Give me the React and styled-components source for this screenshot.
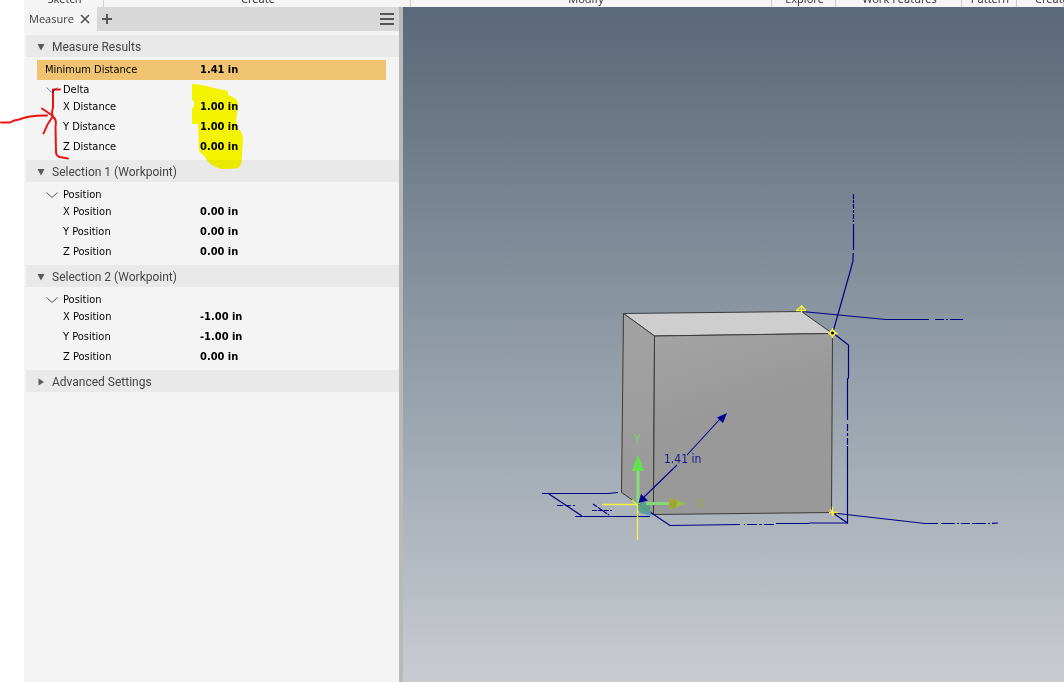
import React from 'react';
import styled, { createGlobalStyle } from 'styled-components';

const GlobalStyle = createGlobalStyle`
  *, *::before, *::after { box-sizing: border-box; }
  html, body, #root { height: 100%; }
  body {
    margin: 0;
    overflow: hidden;
    background: #ffffff;
    font-family: 'DejaVu Sans Condensed', 'DejaVu Sans', sans-serif;
    font-size: 11px;
    color: #000000;
  }
  button {
    margin: 0;
    padding: 0;
    border: 0;
    background: none;
    color: inherit;
    font: inherit;
    text-align: left;
    cursor: pointer;
  }
`;

const App = styled.div`
  display: flex;
  flex-direction: column;
  min-height: 100%;
`;

const Ribbon = styled.header`
  display: grid;
  grid-template-columns: 80fr 307fr 361fr 64fr 126fr 55fr 47fr;
  grid-template-rows: 7px;
  height: 7px;
  margin-left: 24px;
  overflow: hidden;
  background: #f5f5f5;
`;

const RibbonGroup = styled.div`
  display: flex;
  align-items: flex-end;
  justify-content: ${(p) => (p.$start ? 'flex-start' : 'center')};
  min-width: 0;
  padding: 0 ${(p) => (p.$menu ? '12px' : '0')} 1px ${(p) => (p.$start ? '18px' : '2px')};
  border-right: 1px solid #cfcfcf;
  font-family: 'Noto Sans', sans-serif;
  font-size: 11px;
  line-height: 14px;
  color: #3c3c3c;
  white-space: nowrap;
`;

const Workspace = styled.div`
  position: relative;
  flex: 1;
  display: grid;
  grid-template-columns: 24px minmax(300px, 375fr) 4px 661fr;
`;

const Gutter = styled.div`
  background: #ffffff;
`;

const Splitter = styled.div`
  background: #b7bab9;
`;

const Panel = styled.aside`
  background: #f4f4f4;
`;

const TabBar = styled.div`
  display: flex;
  height: 24px;
  margin-bottom: 4px;
  background: #d8d8d8;
`;

const Tab = styled.div`
  display: flex;
  align-items: center;
  justify-content: space-between;
  width: 73px;
  padding: 0 7px 0 5px;
  background: #f4f4f4;
`;

const TabLabel = styled.button`
  font-family: 'Open Sans', sans-serif;
  font-size: 11px;
  line-height: 16px;
  color: #3c3c3c;
`;

const IconButton = styled.button`
  display: flex;
  align-items: center;
  justify-content: center;
  margin-left: ${(p) => (p.$end ? 'auto' : '0')};
  padding: ${(p) => (p.$pad ? '0 5px' : '0')};
`;

const SectionHead = styled.button`
  display: flex;
  align-items: center;
  gap: 7px;
  width: 100%;
  height: 22px;
  padding: 2px 0 0 11px;
  border-left: 2px solid #f4f4f4;
  background: #e9e9e9;
  font-family: Roboto, 'Open Sans', sans-serif;
  font-size: 12px;
  line-height: 16px;
  color: #444444;
`;

const SectionBody = styled.div`
  padding: ${(p) => (p.$flush ? '3px 13px 4px 13px' : '5px 13px 4px 13px')};
`;

const Minimum = styled.dl`
  display: flex;
  align-items: center;
  height: 20px;
  margin: 0 0 2px;
  padding: 0 0 2px 8px;
  background: #efc370;
`;

const MinimumLabel = styled.dt`
  width: 155px;
`;

const MinimumValue = styled.dd`
  margin: 0;
  font-weight: bold;
`;

const GroupToggle = styled.button`
  display: flex;
  align-items: center;
  gap: 5px;
  height: 14px;
  padding: 1px 0 0 9px;
  line-height: 14px;
`;

const Values = styled.table`
  width: 100%;
  table-layout: fixed;
  border-collapse: collapse;
`;

const Name = styled.th`
  width: 163px;
  height: 20px;
  padding: 0 0 0 26px;
  font-weight: normal;
  text-align: left;
`;

const Value = styled.td`
  padding: 0;
  font-weight: bold;
`;

const Viewport = styled.main`
  min-width: 0;
  background: linear-gradient(#5b697c 0%, #627080 9%, #95a0aa 55%, #b2b8c0 80%, #c9cbd0 100%);
`;

const Scene = styled.svg`
  display: block;
  width: 100%;
  height: 100%;
  font-family: 'DejaVu Sans Condensed', 'DejaVu Sans', sans-serif;
`;

const Markup = styled.svg`
  position: absolute;
  top: 0;
  left: 0;
  width: 260px;
  height: 180px;
  pointer-events: none;
  mix-blend-mode: multiply;
`;

const Disclosure = ({ open }) => (
  <svg width="8" height="8" viewBox="0 0 8 8" fill="#5a5a5a" aria-hidden="true">
    {open ? <path d="M0.5 1h7L4 7.5z" /> : <path d="M1.5 0.5v7L7 4z" />}
  </svg>
);

const Chevron = ({ color = '#555555' }) => (
  <svg width="12" height="8" viewBox="0 0 12 8" fill="none" stroke={color} aria-hidden="true">
    <path d="M0.5 1.5L6 6.5L11.5 1.5" />
  </svg>
);

const ribbonGroups = ['Sketch', 'Create', 'Modify', 'Explore', 'Work Features', 'Pattern'];

const selections = [
  {
    title: 'Selection 1 (Workpoint)',
    rows: [['X Position', '0.00 in'], ['Y Position', '0.00 in'], ['Z Position', '0.00 in']],
  },
  {
    title: 'Selection 2 (Workpoint)',
    rows: [['X Position', '-1.00 in'], ['Y Position', '-1.00 in'], ['Z Position', '0.00 in']],
  },
];

const deltas = [['X Distance', '1.00 in'], ['Y Distance', '1.00 in'], ['Z Distance', '0.00 in']];

const ValueTable = ({ rows }) => (
  <Values>
    <tbody>
      {rows.map(([name, value]) => (
        <tr key={name}>
          <Name scope="row">{name}</Name>
          <Value>{value}</Value>
        </tr>
      ))}
    </tbody>
  </Values>
);

const CubeScene = () => (
  <Scene viewBox="403 7 661 675" role="img" aria-label="Cube with a measured distance">
    <defs>
      <linearGradient id="front" x1="0" y1="0" x2="0.3" y2="1">
        <stop offset="0" stopColor="#a4a4a4" />
        <stop offset="0.5" stopColor="#999999" />
        <stop offset="1" stopColor="#999999" />
      </linearGradient>
      <linearGradient id="side" x1="0" y1="0" x2="0" y2="1">
        <stop offset="0" stopColor="#a3a3a3" />
        <stop offset="1" stopColor="#989898" />
      </linearGradient>
    </defs>

    <g stroke="#3a3a3a" strokeWidth="1" strokeLinejoin="round">
      <path d="M623.5 313.5L801.5 311.5L832.5 333.5L654.5 336z" fill="#cfcecf" />
      <path d="M623.5 313.5L654.5 336L653.5 514.5L621.5 492.5z" fill="url(#side)" />
      <path d="M654.5 336L832.5 333.5L831.5 512.5L653.5 514.5z" fill="url(#front)" />
    </g>

    <g fill="none" stroke="#000084" strokeWidth="1.2">
      <path d="M853.5 194V222" strokeDasharray="5 1 3 1" />
      <path d="M853.5 224V250M853.3 253L852.8 262L833 332" />
      <path d="M802 311.5L886 319.5H929M935 319.5H944M946 319.5H948M950 319.5H963" />
      <path d="M833 333L848.5 345V378L847.5 379V420" />
      <path d="M847.5 424V446" strokeDasharray="7 2 3 2" />
      <path d="M847.5 446V523L833 513L925 523.5H938" />
      <path d="M941 523.5H990L998 523" strokeDasharray="14 2 2 2 9 2" />
      <path d="M847 523H810L808 523.5H776" />
      <path d="M774 524.5H744" strokeDasharray="10 2 3 2" />
      <path d="M740 524.5L670 525.5L650 512" />
      <path d="M542 493.5H608L618 492.5M549 494L582 516M575 516.5H650" />
      <path d="M557 505.5H575" strokeDasharray="6 2" />
      <path d="M593 504L609 515M592 510.5H612" strokeDasharray="5 1" />
    </g>

    <g fill="none" stroke="#f4f43c" strokeWidth="1.3">
      <path d="M602 504.5H638M637.5 504V540M632 500L637 504" />
      <path d="M796 310.5H806M801.5 305V313M797 310L801.5 306L806 310" />
      <path d="M828 333.5H838M832.5 328V338M829 333L832.5 329.5L836 333L832.5 336.5z" />
      <path d="M829 512.5H838M832.5 507V516M830 509L834 515" />
    </g>
    <circle cx="832.5" cy="333" r="1.5" fill="#000084" />

    <circle cx="644" cy="508" r="6" fill="#4e9e88" opacity="0.85" />
    <path d="M644 514L650 510L652 516z" fill="#5b9cae" />
    <path d="M638 504V470" stroke="#84e07a" strokeWidth="3" />
    <path d="M638 454.5L632 471H644z" fill="#62e34c" />
    <path d="M646 503.5H671" stroke="#84d878" strokeWidth="3" />
    <path d="M670 497.5L686 503.5L670 509.5z" fill="#95bf3f" />
    <ellipse cx="673" cy="503.5" rx="4" ry="5" fill="#a5a337" />
    <text x="634" y="443" fontSize="12" fill="#75d960">Y</text>
    <text x="697" y="508" fontSize="12" fill="#93ac4c">X</text>

    <path d="M644 497L677 465M687 455L720 419" stroke="#000094" strokeWidth="1.1" />
    <path d="M638.5 503L641 494L648 500.5z" fill="#000094" />
    <path d="M727 413L717 417.5L723 423z" fill="#000094" />
    <text x="664" y="463" fontSize="12" fill="#16168f">1.41 in</text>
  </Scene>
);

export default function MeasureApp() {
  return (
    <App>
      <GlobalStyle />
      <Ribbon>
        {ribbonGroups.map((name) => (
          <RibbonGroup key={name} $menu={name === 'Modify'}>{name}</RibbonGroup>
        ))}
        <RibbonGroup $start>Create</RibbonGroup>
      </Ribbon>
      <Workspace>
        <Gutter />
        <Panel>
          <TabBar>
            <Tab>
              <TabLabel>Measure</TabLabel>
              <IconButton aria-label="Close tab">
                <svg width="10" height="10" viewBox="0 0 10 10" stroke="#555555" strokeWidth="1.7">
                  <path d="M1 1L9 9M9 1L1 9" />
                </svg>
              </IconButton>
            </Tab>
            <IconButton $pad aria-label="Add tab">
              <svg width="10" height="10" viewBox="0 0 10 10" stroke="#555555" strokeWidth="2">
                <path d="M5 0V10M0 5H10" />
              </svg>
            </IconButton>
            <IconButton $pad $end aria-label="Panel menu">
              <svg width="14" height="12" viewBox="0 0 14 12" stroke="#555555" strokeWidth="2">
                <path d="M0 1H14M0 6H14M0 11H14" />
              </svg>
            </IconButton>
          </TabBar>

          <SectionHead aria-expanded="true"><Disclosure open />Measure Results</SectionHead>
          <SectionBody $flush>
            <Minimum>
              <MinimumLabel>Minimum Distance</MinimumLabel>
              <MinimumValue>1.41 in</MinimumValue>
            </Minimum>
            <GroupToggle aria-expanded="true"><Chevron color="#4a90d9" />Delta</GroupToggle>
            <ValueTable rows={deltas} />
          </SectionBody>

          {selections.map(({ title, rows }) => (
            <React.Fragment key={title}>
              <SectionHead aria-expanded="true"><Disclosure open />{title}</SectionHead>
              <SectionBody>
                <GroupToggle aria-expanded="true"><Chevron />Position</GroupToggle>
                <ValueTable rows={rows} />
              </SectionBody>
            </React.Fragment>
          ))}

          <SectionHead aria-expanded="false"><Disclosure />Advanced Settings</SectionHead>
        </Panel>
        <Splitter />
        <Viewport>
          <CubeScene />
        </Viewport>
        <Markup viewBox="0 7 260 180" aria-hidden="true">
          <path
            d="M192 84L200 84.5L214 88L228 91V95Q238 98 238 104L237 114L236 122L238 129Q242 131 243 138L242 156Q242 167 237 168.5L222 169Q209 166 205 157L199 151L198 124H192V108L194 107V101L192 100z"
            fill="#ffff00"
          />
          <g fill="none" stroke="#f51414" strokeWidth="2" strokeLinecap="round" strokeLinejoin="round">
            <path d="M60 89.5H53V108Q51 114 53 117Q57 119 55.5 127L56 152Q56 156 60 157L68 158.5" />
            <path d="M1 122.5H10Q14 120 19 119.5Q30 115 47 115.5M42 108.5L53 116Q47 124 43.5 133.5" />
          </g>
        </Markup>
      </Workspace>
    </App>
  );
}
